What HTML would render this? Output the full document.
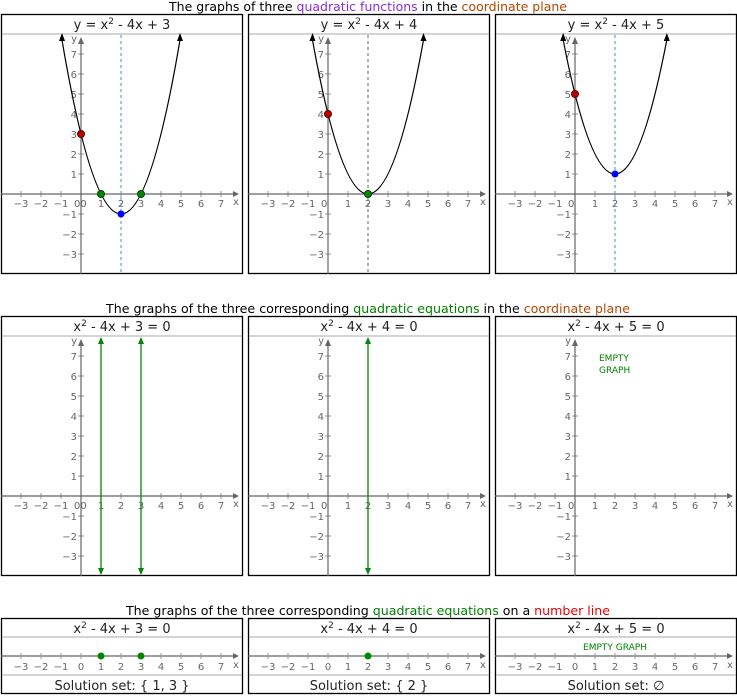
<!DOCTYPE html>
<html><head><meta charset="utf-8"><style>
html,body{margin:0;padding:0;background:#fff;}
svg{display:block;}
.t{font-family:"DejaVu Sans","Liberation Sans",sans-serif;font-size:12px;fill:#000;}
.h{font-family:"DejaVu Sans","Liberation Sans",sans-serif;font-size:13px;fill:#222;text-anchor:middle;}
.l{font-family:"DejaVu Sans","Liberation Sans",sans-serif;font-size:10px;fill:#666;}
.lx{text-anchor:middle;}
.ly{text-anchor:end;}
.ax{stroke:#666;stroke-width:1.2;fill:none;}
.tk{stroke:#999;stroke-width:1;}
.fr{fill:#fff;stroke:#000;stroke-width:1.3;}
.hl{stroke:#aaa;stroke-width:1;}
.g{font-family:"DejaVu Sans","Liberation Sans",sans-serif;font-size:9px;fill:#008000;}
</style></head><body>
<svg width="737" height="696" viewBox="0 0 737 696" xmlns="http://www.w3.org/2000/svg">
<defs>
<marker id="ab" markerWidth="8" markerHeight="8" refX="4" refY="4" orient="auto"><path d="M0,1 L7,4 L0,7z" fill="#000"/></marker>
<marker id="ag" markerWidth="8" markerHeight="8" refX="4" refY="4" orient="auto"><path d="M0,1 L7,4 L0,7z" fill="#080"/></marker>
</defs>

<!-- titles -->
<text class="t" x="368" y="11" text-anchor="middle" textLength="398" lengthAdjust="spacingAndGlyphs">The graphs of three <tspan fill="#8a2be2">quadratic functions</tspan> in the <tspan fill="#b34700">coordinate plane</tspan></text>
<text class="t" x="368" y="313" text-anchor="middle" textLength="524" lengthAdjust="spacingAndGlyphs">The graphs of the three corresponding <tspan fill="#008000">quadratic equations</tspan> in the <tspan fill="#b34700">coordinate plane</tspan></text>
<text class="t" x="368" y="615" text-anchor="middle" textLength="484" lengthAdjust="spacingAndGlyphs">The graphs of the three corresponding <tspan fill="#008000">quadratic equations</tspan> on a <tspan fill="#e00">number line</tspan></text>

<!-- ROW 1 -->
<g transform="translate(1,14)">
<rect class="fr" x="0.5" y="0.5" width="241" height="259"/>
<line class="hl" x1="1" y1="20" x2="241" y2="20"/>
<text class="h" x="121" y="15">y = x<tspan dy="-5" font-size="9">2</tspan><tspan dy="5"> - 4x + 3</tspan></text>
<g>
<line class="tk" x1="20" y1="177" x2="20" y2="183"/><line class="tk" x1="40" y1="177" x2="40" y2="183"/><line class="tk" x1="60" y1="177" x2="60" y2="183"/><line class="tk" x1="100" y1="177" x2="100" y2="183"/><line class="tk" x1="120" y1="177" x2="120" y2="183"/><line class="tk" x1="140" y1="177" x2="140" y2="183"/><line class="tk" x1="160" y1="177" x2="160" y2="183"/><line class="tk" x1="180" y1="177" x2="180" y2="183"/><line class="tk" x1="200" y1="177" x2="200" y2="183"/><line class="tk" x1="220" y1="177" x2="220" y2="183"/>
<line class="tk" x1="77" y1="40" x2="83" y2="40"/><line class="tk" x1="77" y1="60" x2="83" y2="60"/><line class="tk" x1="77" y1="80" x2="83" y2="80"/><line class="tk" x1="77" y1="100" x2="83" y2="100"/><line class="tk" x1="77" y1="120" x2="83" y2="120"/><line class="tk" x1="77" y1="140" x2="83" y2="140"/><line class="tk" x1="77" y1="160" x2="83" y2="160"/><line class="tk" x1="77" y1="200" x2="83" y2="200"/><line class="tk" x1="77" y1="220" x2="83" y2="220"/><line class="tk" x1="77" y1="240" x2="83" y2="240"/>
<line class="ax" x1="0" y1="180" x2="234" y2="180"/><path d="M232,177 L238,180 L232,183z" fill="#666"/>
<line class="ax" x1="80" y1="260" x2="80" y2="28"/><path d="M77,30 L80,23 L83,30z" fill="#666"/>
<text class="l lx" x="20" y="193">−3</text><text class="l lx" x="40" y="193">−2</text><text class="l lx" x="60" y="193">−1</text><text class="l" x="73" y="193" fill="#000">00</text><text class="l lx" x="100" y="193">1</text><text class="l lx" x="120" y="193">2</text><text class="l lx" x="140" y="193">3</text><text class="l lx" x="160" y="193">4</text><text class="l lx" x="180" y="193">5</text><text class="l lx" x="200" y="193">6</text><text class="l lx" x="220" y="193">7</text><text class="l lx" x="235" y="191">x</text>
<text class="l ly" x="76" y="44">7</text><text class="l ly" x="76" y="64">6</text><text class="l ly" x="76" y="84">5</text><text class="l ly" x="76" y="104">4</text><text class="l ly" x="76" y="124">3</text><text class="l ly" x="76" y="144">2</text><text class="l ly" x="76" y="164">1</text><text class="l ly" x="76" y="204">−1</text><text class="l ly" x="76" y="224">−2</text><text class="l ly" x="76" y="244">−3</text><text class="l ly" x="76" y="28">y</text>
</g>
<line x1="120" y1="21" x2="120" y2="259" stroke="#3399cc" stroke-dasharray="3,3"/>
<path d="M61,26 Q120,374 179,26" fill="none" stroke="#000" stroke-width="1.2"/>
<path d="M58,27 L61,19 L64,27z M176,27 L179,19 L182,27z" fill="#000"/>
<circle cx="80" cy="120" r="3.5" fill="#b00" stroke="#600"/>
<circle cx="100" cy="180" r="3.5" fill="#080" stroke="#040"/>
<circle cx="140" cy="180" r="3.5" fill="#080" stroke="#040"/>
<circle cx="120" cy="200" r="3.5" fill="#00f"/>
</g>

<g transform="translate(248,14)">
<rect class="fr" x="0.5" y="0.5" width="241" height="259"/>
<line class="hl" x1="1" y1="20" x2="241" y2="20"/>
<text class="h" x="121" y="15">y = x<tspan dy="-5" font-size="9">2</tspan><tspan dy="5"> - 4x + 4</tspan></text>
<g>
<line class="tk" x1="20" y1="177" x2="20" y2="183"/><line class="tk" x1="40" y1="177" x2="40" y2="183"/><line class="tk" x1="60" y1="177" x2="60" y2="183"/><line class="tk" x1="100" y1="177" x2="100" y2="183"/><line class="tk" x1="120" y1="177" x2="120" y2="183"/><line class="tk" x1="140" y1="177" x2="140" y2="183"/><line class="tk" x1="160" y1="177" x2="160" y2="183"/><line class="tk" x1="180" y1="177" x2="180" y2="183"/><line class="tk" x1="200" y1="177" x2="200" y2="183"/><line class="tk" x1="220" y1="177" x2="220" y2="183"/>
<line class="tk" x1="77" y1="40" x2="83" y2="40"/><line class="tk" x1="77" y1="60" x2="83" y2="60"/><line class="tk" x1="77" y1="80" x2="83" y2="80"/><line class="tk" x1="77" y1="100" x2="83" y2="100"/><line class="tk" x1="77" y1="120" x2="83" y2="120"/><line class="tk" x1="77" y1="140" x2="83" y2="140"/><line class="tk" x1="77" y1="160" x2="83" y2="160"/><line class="tk" x1="77" y1="200" x2="83" y2="200"/><line class="tk" x1="77" y1="220" x2="83" y2="220"/><line class="tk" x1="77" y1="240" x2="83" y2="240"/>
<line class="ax" x1="0" y1="180" x2="234" y2="180"/><path d="M232,177 L238,180 L232,183z" fill="#666"/>
<line class="ax" x1="80" y1="260" x2="80" y2="28"/><path d="M77,30 L80,23 L83,30z" fill="#666"/>
<text class="l lx" x="20" y="193">−3</text><text class="l lx" x="40" y="193">−2</text><text class="l lx" x="60" y="193">−1</text><text class="l" x="73" y="193" fill="#000">0</text><text class="l lx" x="100" y="193">1</text><text class="l lx" x="120" y="193">2</text><text class="l lx" x="140" y="193">3</text><text class="l lx" x="160" y="193">4</text><text class="l lx" x="180" y="193">5</text><text class="l lx" x="200" y="193">6</text><text class="l lx" x="220" y="193">7</text><text class="l lx" x="235" y="191">x</text>
<text class="l ly" x="76" y="44">7</text><text class="l ly" x="76" y="64">6</text><text class="l ly" x="76" y="84">5</text><text class="l ly" x="76" y="104">4</text><text class="l ly" x="76" y="124">3</text><text class="l ly" x="76" y="144">2</text><text class="l ly" x="76" y="164">1</text><text class="l ly" x="76" y="204">−1</text><text class="l ly" x="76" y="224">−2</text><text class="l ly" x="76" y="244">−3</text><text class="l ly" x="76" y="28">y</text>
</g>
<line x1="120" y1="21" x2="120" y2="259" stroke="#666" stroke-dasharray="3,3"/>
<path d="M64.5,26 Q120,334 175.5,26" fill="none" stroke="#000" stroke-width="1.2"/>
<path d="M61.5,27 L64.5,19 L67.5,27z M172.5,27 L175.5,19 L178.5,27z" fill="#000"/>
<circle cx="80" cy="100" r="3.5" fill="#b00" stroke="#600"/>
<circle cx="120" cy="180" r="3.5" fill="#080" stroke="#040"/>
</g>

<g transform="translate(495,14)">
<rect class="fr" x="0.5" y="0.5" width="241" height="259"/>
<line class="hl" x1="1" y1="20" x2="241" y2="20"/>
<text class="h" x="121" y="15">y = x<tspan dy="-5" font-size="9">2</tspan><tspan dy="5"> - 4x + 5</tspan></text>
<g>
<line class="tk" x1="20" y1="177" x2="20" y2="183"/><line class="tk" x1="40" y1="177" x2="40" y2="183"/><line class="tk" x1="60" y1="177" x2="60" y2="183"/><line class="tk" x1="100" y1="177" x2="100" y2="183"/><line class="tk" x1="120" y1="177" x2="120" y2="183"/><line class="tk" x1="140" y1="177" x2="140" y2="183"/><line class="tk" x1="160" y1="177" x2="160" y2="183"/><line class="tk" x1="180" y1="177" x2="180" y2="183"/><line class="tk" x1="200" y1="177" x2="200" y2="183"/><line class="tk" x1="220" y1="177" x2="220" y2="183"/>
<line class="tk" x1="77" y1="40" x2="83" y2="40"/><line class="tk" x1="77" y1="60" x2="83" y2="60"/><line class="tk" x1="77" y1="80" x2="83" y2="80"/><line class="tk" x1="77" y1="100" x2="83" y2="100"/><line class="tk" x1="77" y1="120" x2="83" y2="120"/><line class="tk" x1="77" y1="140" x2="83" y2="140"/><line class="tk" x1="77" y1="160" x2="83" y2="160"/><line class="tk" x1="77" y1="200" x2="83" y2="200"/><line class="tk" x1="77" y1="220" x2="83" y2="220"/><line class="tk" x1="77" y1="240" x2="83" y2="240"/>
<line class="ax" x1="0" y1="180" x2="234" y2="180"/><path d="M232,177 L238,180 L232,183z" fill="#666"/>
<line class="ax" x1="80" y1="260" x2="80" y2="28"/><path d="M77,30 L80,23 L83,30z" fill="#666"/>
<text class="l lx" x="20" y="193">−3</text><text class="l lx" x="40" y="193">−2</text><text class="l lx" x="60" y="193">−1</text><text class="l" x="73" y="193" fill="#000">0</text><text class="l lx" x="100" y="193">1</text><text class="l lx" x="120" y="193">2</text><text class="l lx" x="140" y="193">3</text><text class="l lx" x="160" y="193">4</text><text class="l lx" x="180" y="193">5</text><text class="l lx" x="200" y="193">6</text><text class="l lx" x="220" y="193">7</text><text class="l lx" x="235" y="191">x</text>
<text class="l ly" x="76" y="44">7</text><text class="l ly" x="76" y="64">6</text><text class="l ly" x="76" y="84">5</text><text class="l ly" x="76" y="104">4</text><text class="l ly" x="76" y="124">3</text><text class="l ly" x="76" y="144">2</text><text class="l ly" x="76" y="164">1</text><text class="l ly" x="76" y="204">−1</text><text class="l ly" x="76" y="224">−2</text><text class="l ly" x="76" y="244">−3</text><text class="l ly" x="76" y="28">y</text>
</g>
<line x1="120" y1="21" x2="120" y2="259" stroke="#3399cc" stroke-dasharray="3,3"/>
<path d="M68.2,26 Q120,294 171.8,26" fill="none" stroke="#000" stroke-width="1.2"/>
<path d="M65.2,27 L68.2,19 L71.2,27z M168.8,27 L171.8,19 L174.8,27z" fill="#000"/>
<circle cx="80" cy="80" r="3.5" fill="#b00" stroke="#600"/>
<circle cx="120" cy="160" r="3.5" fill="#00f"/>
</g>

<!-- ROW 2 -->
<g transform="translate(1,316)">
<rect class="fr" x="0.5" y="0.5" width="241" height="259"/>
<line class="hl" x1="1" y1="20" x2="241" y2="20"/>
<text class="h" x="121" y="15">x<tspan dy="-5" font-size="9">2</tspan><tspan dy="5"> - 4x + 3 = 0</tspan></text>
<g>
<line class="tk" x1="20" y1="177" x2="20" y2="183"/><line class="tk" x1="40" y1="177" x2="40" y2="183"/><line class="tk" x1="60" y1="177" x2="60" y2="183"/><line class="tk" x1="100" y1="177" x2="100" y2="183"/><line class="tk" x1="120" y1="177" x2="120" y2="183"/><line class="tk" x1="140" y1="177" x2="140" y2="183"/><line class="tk" x1="160" y1="177" x2="160" y2="183"/><line class="tk" x1="180" y1="177" x2="180" y2="183"/><line class="tk" x1="200" y1="177" x2="200" y2="183"/><line class="tk" x1="220" y1="177" x2="220" y2="183"/>
<line class="tk" x1="77" y1="40" x2="83" y2="40"/><line class="tk" x1="77" y1="60" x2="83" y2="60"/><line class="tk" x1="77" y1="80" x2="83" y2="80"/><line class="tk" x1="77" y1="100" x2="83" y2="100"/><line class="tk" x1="77" y1="120" x2="83" y2="120"/><line class="tk" x1="77" y1="140" x2="83" y2="140"/><line class="tk" x1="77" y1="160" x2="83" y2="160"/><line class="tk" x1="77" y1="200" x2="83" y2="200"/><line class="tk" x1="77" y1="220" x2="83" y2="220"/><line class="tk" x1="77" y1="240" x2="83" y2="240"/>
<line class="ax" x1="0" y1="180" x2="234" y2="180"/><path d="M232,177 L238,180 L232,183z" fill="#666"/>
<line class="ax" x1="80" y1="260" x2="80" y2="28"/><path d="M77,30 L80,23 L83,30z" fill="#666"/>
<text class="l lx" x="20" y="193">−3</text><text class="l lx" x="40" y="193">−2</text><text class="l lx" x="60" y="193">−1</text><text class="l" x="73" y="193" fill="#000">00</text><text class="l lx" x="100" y="193">1</text><text class="l lx" x="120" y="193">2</text><text class="l lx" x="140" y="193">3</text><text class="l lx" x="160" y="193">4</text><text class="l lx" x="180" y="193">5</text><text class="l lx" x="200" y="193">6</text><text class="l lx" x="220" y="193">7</text><text class="l lx" x="235" y="191">x</text>
<text class="l ly" x="76" y="44">7</text><text class="l ly" x="76" y="64">6</text><text class="l ly" x="76" y="84">5</text><text class="l ly" x="76" y="104">4</text><text class="l ly" x="76" y="124">3</text><text class="l ly" x="76" y="144">2</text><text class="l ly" x="76" y="164">1</text><text class="l ly" x="76" y="204">−1</text><text class="l ly" x="76" y="224">−2</text><text class="l ly" x="76" y="244">−3</text><text class="l ly" x="76" y="28">y</text>
</g>
<line x1="100" y1="26" x2="100" y2="254" stroke="#080" stroke-width="1.3"/>
<line x1="140" y1="26" x2="140" y2="254" stroke="#080" stroke-width="1.3"/>
<path d="M97,28 L100,21 L103,28z M137,28 L140,21 L143,28z M97,252 L100,259 L103,252z M137,252 L140,259 L143,252z" fill="#080"/>
</g>

<g transform="translate(248,316)">
<rect class="fr" x="0.5" y="0.5" width="241" height="259"/>
<line class="hl" x1="1" y1="20" x2="241" y2="20"/>
<text class="h" x="121" y="15">x<tspan dy="-5" font-size="9">2</tspan><tspan dy="5"> - 4x + 4 = 0</tspan></text>
<g>
<line class="tk" x1="20" y1="177" x2="20" y2="183"/><line class="tk" x1="40" y1="177" x2="40" y2="183"/><line class="tk" x1="60" y1="177" x2="60" y2="183"/><line class="tk" x1="100" y1="177" x2="100" y2="183"/><line class="tk" x1="120" y1="177" x2="120" y2="183"/><line class="tk" x1="140" y1="177" x2="140" y2="183"/><line class="tk" x1="160" y1="177" x2="160" y2="183"/><line class="tk" x1="180" y1="177" x2="180" y2="183"/><line class="tk" x1="200" y1="177" x2="200" y2="183"/><line class="tk" x1="220" y1="177" x2="220" y2="183"/>
<line class="tk" x1="77" y1="40" x2="83" y2="40"/><line class="tk" x1="77" y1="60" x2="83" y2="60"/><line class="tk" x1="77" y1="80" x2="83" y2="80"/><line class="tk" x1="77" y1="100" x2="83" y2="100"/><line class="tk" x1="77" y1="120" x2="83" y2="120"/><line class="tk" x1="77" y1="140" x2="83" y2="140"/><line class="tk" x1="77" y1="160" x2="83" y2="160"/><line class="tk" x1="77" y1="200" x2="83" y2="200"/><line class="tk" x1="77" y1="220" x2="83" y2="220"/><line class="tk" x1="77" y1="240" x2="83" y2="240"/>
<line class="ax" x1="0" y1="180" x2="234" y2="180"/><path d="M232,177 L238,180 L232,183z" fill="#666"/>
<line class="ax" x1="80" y1="260" x2="80" y2="28"/><path d="M77,30 L80,23 L83,30z" fill="#666"/>
<text class="l lx" x="20" y="193">−3</text><text class="l lx" x="40" y="193">−2</text><text class="l lx" x="60" y="193">−1</text><text class="l" x="73" y="193" fill="#000">0</text><text class="l lx" x="100" y="193">1</text><text class="l lx" x="120" y="193">2</text><text class="l lx" x="140" y="193">3</text><text class="l lx" x="160" y="193">4</text><text class="l lx" x="180" y="193">5</text><text class="l lx" x="200" y="193">6</text><text class="l lx" x="220" y="193">7</text><text class="l lx" x="235" y="191">x</text>
<text class="l ly" x="76" y="44">7</text><text class="l ly" x="76" y="64">6</text><text class="l ly" x="76" y="84">5</text><text class="l ly" x="76" y="104">4</text><text class="l ly" x="76" y="124">3</text><text class="l ly" x="76" y="144">2</text><text class="l ly" x="76" y="164">1</text><text class="l ly" x="76" y="204">−1</text><text class="l ly" x="76" y="224">−2</text><text class="l ly" x="76" y="244">−3</text><text class="l ly" x="76" y="28">y</text>
</g>
<line x1="120" y1="26" x2="120" y2="254" stroke="#080" stroke-width="1.3"/>
<path d="M117,28 L120,21 L123,28z M117,252 L120,259 L123,252z" fill="#080"/>
</g>

<g transform="translate(495,316)">
<rect class="fr" x="0.5" y="0.5" width="241" height="259"/>
<line class="hl" x1="1" y1="20" x2="241" y2="20"/>
<text class="h" x="121" y="15">x<tspan dy="-5" font-size="9">2</tspan><tspan dy="5"> - 4x + 5 = 0</tspan></text>
<g>
<line class="tk" x1="20" y1="177" x2="20" y2="183"/><line class="tk" x1="40" y1="177" x2="40" y2="183"/><line class="tk" x1="60" y1="177" x2="60" y2="183"/><line class="tk" x1="100" y1="177" x2="100" y2="183"/><line class="tk" x1="120" y1="177" x2="120" y2="183"/><line class="tk" x1="140" y1="177" x2="140" y2="183"/><line class="tk" x1="160" y1="177" x2="160" y2="183"/><line class="tk" x1="180" y1="177" x2="180" y2="183"/><line class="tk" x1="200" y1="177" x2="200" y2="183"/><line class="tk" x1="220" y1="177" x2="220" y2="183"/>
<line class="tk" x1="77" y1="40" x2="83" y2="40"/><line class="tk" x1="77" y1="60" x2="83" y2="60"/><line class="tk" x1="77" y1="80" x2="83" y2="80"/><line class="tk" x1="77" y1="100" x2="83" y2="100"/><line class="tk" x1="77" y1="120" x2="83" y2="120"/><line class="tk" x1="77" y1="140" x2="83" y2="140"/><line class="tk" x1="77" y1="160" x2="83" y2="160"/><line class="tk" x1="77" y1="200" x2="83" y2="200"/><line class="tk" x1="77" y1="220" x2="83" y2="220"/><line class="tk" x1="77" y1="240" x2="83" y2="240"/>
<line class="ax" x1="0" y1="180" x2="234" y2="180"/><path d="M232,177 L238,180 L232,183z" fill="#666"/>
<line class="ax" x1="80" y1="260" x2="80" y2="28"/><path d="M77,30 L80,23 L83,30z" fill="#666"/>
<text class="l lx" x="20" y="193">−3</text><text class="l lx" x="40" y="193">−2</text><text class="l lx" x="60" y="193">−1</text><text class="l" x="73" y="193" fill="#000">0</text><text class="l lx" x="100" y="193">1</text><text class="l lx" x="120" y="193">2</text><text class="l lx" x="140" y="193">3</text><text class="l lx" x="160" y="193">4</text><text class="l lx" x="180" y="193">5</text><text class="l lx" x="200" y="193">6</text><text class="l lx" x="220" y="193">7</text><text class="l lx" x="235" y="191">x</text>
<text class="l ly" x="76" y="44">7</text><text class="l ly" x="76" y="64">6</text><text class="l ly" x="76" y="84">5</text><text class="l ly" x="76" y="104">4</text><text class="l ly" x="76" y="124">3</text><text class="l ly" x="76" y="144">2</text><text class="l ly" x="76" y="164">1</text><text class="l ly" x="76" y="204">−1</text><text class="l ly" x="76" y="224">−2</text><text class="l ly" x="76" y="244">−3</text><text class="l ly" x="76" y="28">y</text>
</g>
<text class="g" x="104" y="45">EMPTY</text>
<text class="g" x="104" y="57">GRAPH</text>
</g>

<!-- ROW 3 -->
<g transform="translate(1,618)">
<rect class="fr" x="0.5" y="0.5" width="241" height="75"/>
<line class="hl" x1="1" y1="19" x2="241" y2="19"/>
<line class="hl" x1="1" y1="57" x2="241" y2="57"/>
<text class="h" x="121" y="15">x<tspan dy="-5" font-size="9">2</tspan><tspan dy="5"> - 4x + 3 = 0</tspan></text>
<line class="ax" x1="0" y1="38" x2="234" y2="38"/><path d="M232,35 L238,38 L232,41z" fill="#666"/>
<path class="tk" d="M20,35V41M40,35V41M60,35V41M80,35V41M100,35V41M120,35V41M140,35V41M160,35V41M180,35V41M200,35V41M220,35V41"/>
<text class="l lx" x="20" y="52">−3</text><text class="l lx" x="40" y="52">−2</text><text class="l lx" x="60" y="52">−1</text><text class="l lx" x="80" y="52" fill="#000">0</text><text class="l lx" x="100" y="52">1</text><text class="l lx" x="120" y="52">2</text><text class="l lx" x="140" y="52">3</text><text class="l lx" x="160" y="52">4</text><text class="l lx" x="180" y="52">5</text><text class="l lx" x="200" y="52">6</text><text class="l lx" x="220" y="52">7</text><text class="l lx" x="235" y="50">x</text>
<circle cx="100" cy="38" r="3.5" fill="#080"/><circle cx="140" cy="38" r="3.5" fill="#080"/>
<text class="h" x="121" y="72">Solution set: { 1, 3 }</text>
</g>

<g transform="translate(248,618)">
<rect class="fr" x="0.5" y="0.5" width="241" height="75"/>
<line class="hl" x1="1" y1="19" x2="241" y2="19"/>
<line class="hl" x1="1" y1="57" x2="241" y2="57"/>
<text class="h" x="121" y="15">x<tspan dy="-5" font-size="9">2</tspan><tspan dy="5"> - 4x + 4 = 0</tspan></text>
<line class="ax" x1="0" y1="38" x2="234" y2="38"/><path d="M232,35 L238,38 L232,41z" fill="#666"/>
<path class="tk" d="M20,35V41M40,35V41M60,35V41M80,35V41M100,35V41M120,35V41M140,35V41M160,35V41M180,35V41M200,35V41M220,35V41"/>
<text class="l lx" x="20" y="52">−3</text><text class="l lx" x="40" y="52">−2</text><text class="l lx" x="60" y="52">−1</text><text class="l lx" x="80" y="52" fill="#000">0</text><text class="l lx" x="100" y="52">1</text><text class="l lx" x="120" y="52">2</text><text class="l lx" x="140" y="52">3</text><text class="l lx" x="160" y="52">4</text><text class="l lx" x="180" y="52">5</text><text class="l lx" x="200" y="52">6</text><text class="l lx" x="220" y="52">7</text><text class="l lx" x="235" y="50">x</text>
<circle cx="120" cy="38" r="3.5" fill="#080"/>
<text class="h" x="121" y="72">Solution set: { 2 }</text>
</g>

<g transform="translate(495,618)">
<rect class="fr" x="0.5" y="0.5" width="241" height="75"/>
<line class="hl" x1="1" y1="19" x2="241" y2="19"/>
<line class="hl" x1="1" y1="57" x2="241" y2="57"/>
<text class="h" x="121" y="15">x<tspan dy="-5" font-size="9">2</tspan><tspan dy="5"> - 4x + 5 = 0</tspan></text>
<text class="g" x="120" y="32" text-anchor="middle">EMPTY GRAPH</text>
<line class="ax" x1="0" y1="38" x2="234" y2="38"/><path d="M232,35 L238,38 L232,41z" fill="#666"/>
<path class="tk" d="M20,35V41M40,35V41M60,35V41M80,35V41M100,35V41M120,35V41M140,35V41M160,35V41M180,35V41M200,35V41M220,35V41"/>
<text class="l lx" x="20" y="52">−3</text><text class="l lx" x="40" y="52">−2</text><text class="l lx" x="60" y="52">−1</text><text class="l lx" x="80" y="52" fill="#000">0</text><text class="l lx" x="100" y="52">1</text><text class="l lx" x="120" y="52">2</text><text class="l lx" x="140" y="52">3</text><text class="l lx" x="160" y="52">4</text><text class="l lx" x="180" y="52">5</text><text class="l lx" x="200" y="52">6</text><text class="l lx" x="220" y="52">7</text><text class="l lx" x="235" y="50">x</text>
<text class="h" x="121" y="72">Solution set: ∅</text>
</g>
</svg>
</body></html>
